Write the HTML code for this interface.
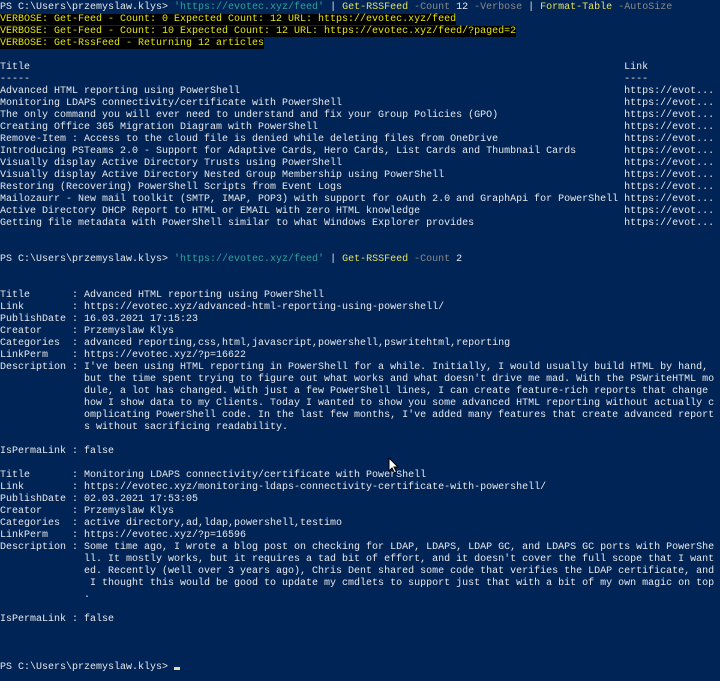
<!DOCTYPE html>
<html><head><meta charset="utf-8"><style>
html,body{margin:0;padding:0;background:#012456;width:720px;height:681px;overflow:hidden}
pre{margin:0;padding-top:2px;font-family:"Liberation Mono",monospace;font-size:10px;line-height:12px;color:#e8e8ea;white-space:pre}
.v{background:#000;color:#e5e510}
.s{color:#2fa39a}
.c{color:#e5e05a}
.p{color:#8a8a8a}
.cur{display:inline-block;width:6px;height:3px;background:#f0d9a8;vertical-align:-1px}
</style></head><body><pre>PS C:\Users\przemyslaw.klys&gt; <span class="s">'https://evotec.xyz/feed'</span> | <span class="c">Get-RSSFeed</span> <span class="p">-Count</span> 12 <span class="p">-Verbose</span> | <span class="c">Format-Table</span> <span class="p">-AutoSize</span>
<span class="v">VERBOSE: Get-Feed - Count: 0 Expected Count: 12 URL: https://evotec.xyz/feed</span>
<span class="v">VERBOSE: Get-Feed - Count: 10 Expected Count: 12 URL: https://evotec.xyz/feed/?paged=2</span>
<span class="v">VERBOSE: Get-RssFeed - Returning 12 articles</span>

Title                                                                                                   Link
-----                                                                                                   ----
Advanced HTML reporting using PowerShell                                                                https://evot...
Monitoring LDAPS connectivity/certificate with PowerShell                                               https://evot...
The only command you will ever need to understand and fix your Group Policies (GPO)                     https://evot...
Creating Office 365 Migration Diagram with PowerShell                                                   https://evot...
Remove-Item : Access to the cloud file is denied while deleting files from OneDrive                     https://evot...
Introducing PSTeams 2.0 - Support for Adaptive Cards, Hero Cards, List Cards and Thumbnail Cards        https://evot...
Visually display Active Directory Trusts using PowerShell                                               https://evot...
Visually display Active Directory Nested Group Membership using PowerShell                              https://evot...
Restoring (Recovering) PowerShell Scripts from Event Logs                                               https://evot...
Mailozaurr - New mail toolkit (SMTP, IMAP, POP3) with support for oAuth 2.0 and GraphApi for PowerShell https://evot...
Active Directory DHCP Report to HTML or EMAIL with zero HTML knowledge                                  https://evot...
Getting file metadata with PowerShell similar to what Windows Explorer provides                         https://evot...


PS C:\Users\przemyslaw.klys&gt; <span class="s">'https://evotec.xyz/feed'</span> | <span class="c">Get-RSSFeed</span> <span class="p">-Count</span> 2


Title       : Advanced HTML reporting using PowerShell
Link        : https://evotec.xyz/advanced-html-reporting-using-powershell/
PublishDate : 16.03.2021 17:15:23
Creator     : Przemyslaw Klys
Categories  : advanced reporting,css,html,javascript,powershell,pswritehtml,reporting
LinkPerm    : https://evotec.xyz/?p=16622
Description : I've been using HTML reporting in PowerShell for a while. Initially, I would usually build HTML by hand,
              but the time spent trying to figure out what works and what doesn't drive me mad. With the PSWriteHTML mo
              dule, a lot has changed. With just a few PowerShell lines, I can create feature-rich reports that change
              how I show data to my Clients. Today I wanted to show you some advanced HTML reporting without actually c
              omplicating PowerShell code. In the last few months, I've added many features that create advanced report
              s without sacrificing readability.

IsPermaLink : false

Title       : Monitoring LDAPS connectivity/certificate with PowerShell
Link        : https://evotec.xyz/monitoring-ldaps-connectivity-certificate-with-powershell/
PublishDate : 02.03.2021 17:53:05
Creator     : Przemyslaw Klys
Categories  : active directory,ad,ldap,powershell,testimo
LinkPerm    : https://evotec.xyz/?p=16596
Description : Some time ago, I wrote a blog post on checking for LDAP, LDAPS, LDAP GC, and LDAPS GC ports with PowerShe
              ll. It mostly works, but it requires a tad bit of effort, and it doesn't cover the full scope that I want
              ed. Recently (well over 3 years ago), Chris Dent shared some code that verifies the LDAP certificate, and
               I thought this would be good to update my cmdlets to support just that with a bit of my own magic on top
              .

IsPermaLink : false



PS C:\Users\przemyslaw.klys&gt; <span class="cur"></span></pre>
<svg style="position:absolute;left:388px;top:457px" width="12" height="18" viewBox="0 0 12 18"><path d="M1 1 L1 14 L4 11 L6.5 16 L8.5 15 L6 10 L10 10 Z" fill="#fff" stroke="#000" stroke-width="1"/></svg>
</body></html>
